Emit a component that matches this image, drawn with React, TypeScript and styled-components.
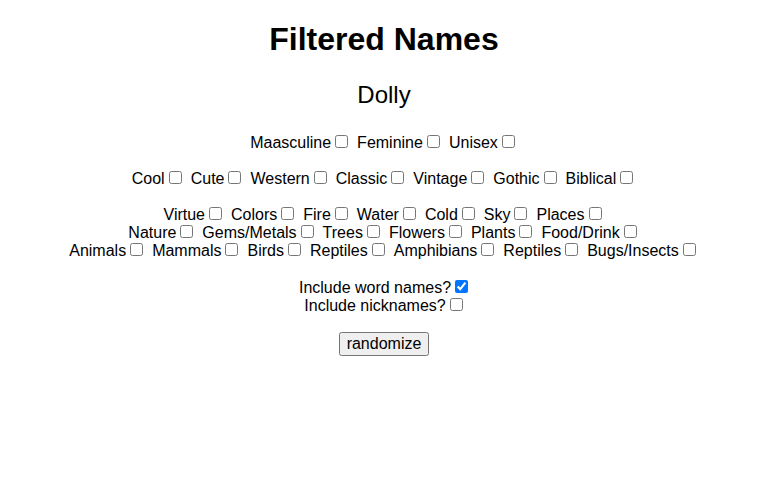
import React from "react";
import styled, { createGlobalStyle } from "styled-components";

const Global = createGlobalStyle`
  html, body { margin: 0; padding: 0; background: #fff; }
  body { font-family: "Liberation Sans", Arial, sans-serif; color: #000; }
`;

const Page = styled.div`
  text-align: center;
  font-size: 16px;
  padding-top: 0.1px;
`;

const Title = styled.h1`
  font-size: 32px;
  font-weight: bold;
  margin: 20.5px 0 21.44px;
`;

const Name = styled.h2`
  font-size: 24px;
  font-weight: normal;
  margin: 23px 0;
`;

const Row = styled.div<{ $gap?: number; $shift?: number }>`
  margin-top: ${(p) => p.$gap ?? 0}px;
  padding-left: ${(p) => p.$shift ?? 0}px;
  height: 18px;
  line-height: 18px;
  white-space: nowrap;
`;

const Option = styled.span`
  & + & { margin-left: 6px; }
`;

const Box = styled.input`
  width: 13px;
  height: 13px;
  margin: 3px 3px 3px 4px;
  vertical-align: baseline;
`;

const Button = styled.button`
  font-family: "Liberation Sans", Arial, sans-serif;
  font-size: 16px;
  padding: 1px 6px;
  margin-top: 19px;
`;

const rows: { gap: number; items: string[] }[] = [
  { gap: 0, items: ["Maasculine", "Feminine", "Unisex"] },
  { gap: 18, items: ["Cool", "Cute", "Western", "Classic", "Vintage", "Gothic", "Biblical"] },
  { gap: 18, items: ["Virtue", "Colors", "Fire", "Water", "Cold", "Sky", "Places"] },
  { gap: 0, items: ["Nature", "Gems/Metals", "Trees", "Flowers", "Plants", "Food/Drink"] },
  { gap: 0, items: ["Animals", "Mammals", "Birds", "Reptiles", "Amphibians", "Reptiles", "Bugs/Insects"] },
];

export default function App() {
  return (
    <Page>
      <Global />
      <Title>Filtered Names</Title>
      <Name>Dolly</Name>
      {rows.map((r, i) => (
        <Row key={i} $gap={r.gap}>
          {r.items.map((label, j) => (
            <Option key={j}>
              {label}
              <Box type="checkbox" />
            </Option>
          ))}
        </Row>
      ))}
      <Row $gap={19} $shift={2}>
        Include word names?<Box type="checkbox" defaultChecked />
      </Row>
      <Row $shift={2}>
        Include nicknames?<Box type="checkbox" />
      </Row>
      <Button>randomize</Button>
    </Page>
  );
}
